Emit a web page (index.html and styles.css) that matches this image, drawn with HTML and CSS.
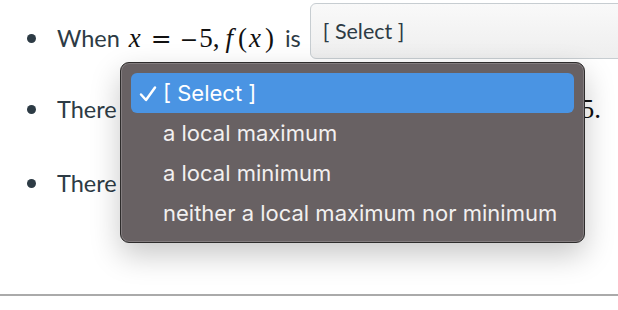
FILE: index.html
```html
<!DOCTYPE html>
<html>
<head>
<meta charset="utf-8">
<link rel="stylesheet" href="styles.css">
</head>
<body>
<div class="page">
  <ul class="answers">
    <li class="row row-1">
      <div class="line">
        <span class="dot"></span>
        <span class="txt">When</span>
        <span class="math"><i class="var vx">x</i><span class="rel">=</span><span class="minus">−</span><span>5</span><span class="punct">,</span><i class="var vf">f</i><span class="lp">(</span><i class="var vx2">x</i><span>)</span></span>
        <span class="txt">is</span>
      </div>
      <div class="select">[ Select ]</div>
    </li>
    <li class="row row-2">
      <div class="line">
        <span class="dot"></span>
        <span class="txt">There</span>
        <span class="fill"></span>
        <span class="math end">5.</span>
      </div>
    </li>
    <li class="row row-3">
      <div class="line">
        <span class="dot"></span>
        <span class="txt">There</span>
      </div>
    </li>
  </ul>
  <hr class="rule">
  <div class="menu">
    <div class="item active"><svg class="check" width="18" height="18" viewBox="0 0 18 18"><polyline points="2,9.5 7,15 16,2.5" fill="none" stroke="#fff" stroke-width="2.5" stroke-linecap="round" stroke-linejoin="round"/></svg>[ Select ]</div>
    <div class="item">a local maximum</div>
    <div class="item">a local minimum</div>
    <div class="item">neither a local maximum nor minimum</div>
  </div>
</div>
</body>
</html>
```
FILE: styles.css
```css
html, body {
  margin: 0;
  padding: 0;
  background: #fff;
  overflow: hidden;
}
.page {
  position: relative;
  width: 618px;
  height: 310px;
  font-family: Lato, "Liberation Sans", sans-serif;
  color: #2d3b45;
}
.answers {
  list-style: none;
  margin: 0;
  padding: 0;
}
.row {
  display: flex;
  align-items: flex-start;
}
.row-1 { height: 62px; }
.row-1 .line { margin-top: 24px; }
.row-2 { padding-top: 33px; }
.row-3 { padding-top: 46px; }
.line {
  display: flex;
  align-items: baseline;
  height: 28px;
  font-size: 23.5px;
  line-height: 28px;
  white-space: nowrap;
}
.row-2 .line { flex: 1; }
.dot {
  align-self: center;
  width: 9px;
  height: 9px;
  border-radius: 50%;
  background: #2d3b45;
  margin-left: 27px;
  margin-right: 21px;
  flex-shrink: 0;
}
.math {
  font-family: "Liberation Serif", "DejaVu Serif", serif;
  font-size: 27px;
  color: #111;
  margin: 0 11px 0 9px;
}
.var { font-style: italic; }
.vx { margin-right: 10px; }
.rel {
  font-family: "DejaVu Serif", serif;
  font-size: 25px;
  margin-right: 8px;
}
.minus {
  font-family: "DejaVu Serif", serif;
  font-size: 22px;
  margin-right: 1px;
}
.punct { margin-right: 6px; }
.vf { margin-right: 5px; }
.lp { margin-right: 2px; }
.vx2 { margin-right: 4px; }
.fill { flex: 1; }
.end { margin: 0 17px 0 0; }
.select {
  flex-shrink: 0;
  margin-top: 3px;
  margin-left: 9px;
  width: 330px;
  height: 56px;
  box-sizing: border-box;
  border: 1px solid #c7cdd1;
  border-radius: 6px;
  background: linear-gradient(#f9f9f9, #eeeeee);
  padding-left: 12px;
  font-size: 21.5px;
  line-height: 54px;
  color: #2d3b45;
}
.rule {
  margin: 97px 0 0;
  border: 0;
  height: 2px;
  background: #aaaaaa;
}
.menu {
  position: absolute;
  left: 120px;
  top: 62px;
  width: 465px;
  height: 181px;
  box-sizing: border-box;
  padding: 10px;
  background: #686163;
  border: 1px solid #2e2c2c;
  border-radius: 9px;
  box-shadow: inset 0 0 0 1px rgba(255,255,255,0.18), 0 12px 30px rgba(0,0,0,0.22);
  font-family: Inter, "Noto Sans", sans-serif;
  font-size: 22px;
  color: #f2f0f0;
}
.item {
  position: relative;
  height: 40px;
  line-height: 40px;
  padding-left: 32px;
  border-radius: 6px;
  white-space: nowrap;
}
.item.active {
  background: #4a94e3;
  color: #fff;
}
.check {
  position: absolute;
  left: 8px;
  top: 12px;
}
```
